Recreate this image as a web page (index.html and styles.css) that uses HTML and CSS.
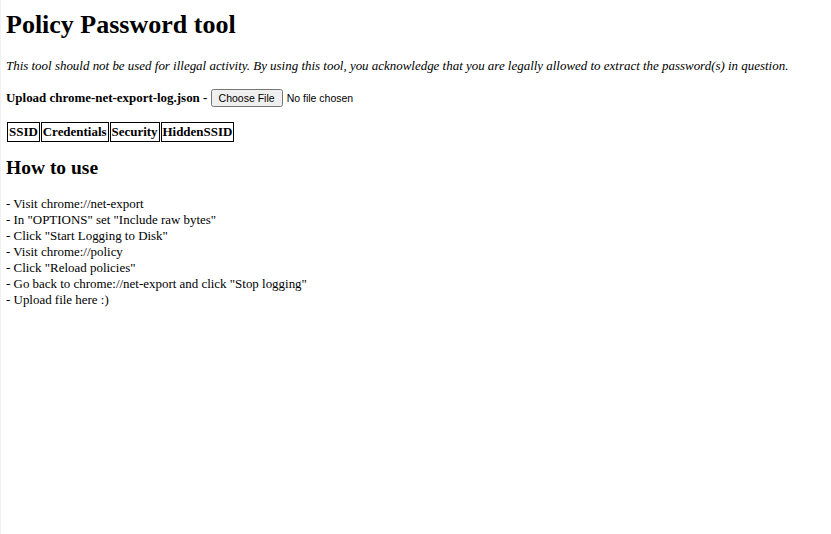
FILE: index.html
```html
<!DOCTYPE html>
<html>
<head>
<meta charset="utf-8">
<title>Policy Password tool</title>
<link rel="stylesheet" href="styles.css">
</head>
<body>
<h1 class="title">Policy Password tool</h1>
<p class="warning"><i>This tool should not be used for illegal activity. By using this tool, you acknowledge that you are legally allowed to extract the password(s) in question.</i></p>
<p class="upload"><b>Upload chrome-net-export-log.json - </b><input class="file" type="file"></p>
<table class="results">
<tr><th>SSID</th><th>Credentials</th><th>Security</th><th>HiddenSSID</th></tr>
</table>
<h2 class="subtitle">How to use</h2>
<p class="steps">- Visit chrome://net-export<br>- In "OPTIONS" set "Include raw bytes"<br>- Click "Start Logging to Disk"<br>- Visit chrome://policy<br>- Click "Reload policies"<br>- Go back to chrome://net-export and click "Stop logging"<br>- Upload file here :)</p>
</body>
</html>
```
FILE: styles.css
```css
html {
  background: #ffffff;
  min-height: 100%;
  box-shadow: inset 1px 0 0 #f1f1f1;
}
body {
  margin: 8px 6px;
  font-family: "Liberation Serif", "Times New Roman", serif;
  font-size: 12.95px;
  line-height: 16px;
  color: #000;
}
.title {
  font-size: 26px;
  line-height: 30px;
  margin: 2px 0 18px;
}
.warning, .steps {
  margin: 13px 0;
}
.upload {
  margin: 15px 0 13px;
}
.results {
  border-spacing: 1px;
  margin-top: 14px;
}
.results th {
  border: 1px solid #000;
  padding: 1px 1px;
}
.subtitle {
  font-size: 19.5px;
  line-height: 22px;
  margin: 14px 0 17px;
}
.file {
  font-size: 10.5px;
}
```
